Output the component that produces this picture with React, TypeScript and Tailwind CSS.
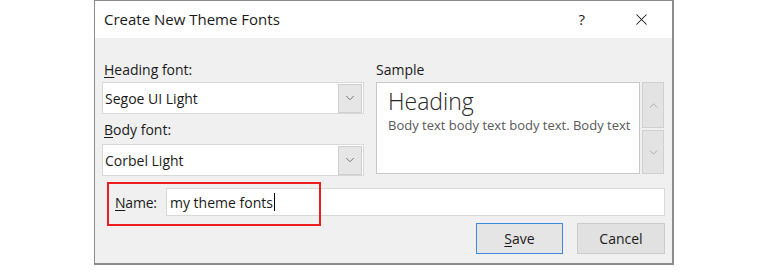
import { ChevronDown, ChevronUp, X } from 'lucide-react';

const font = { fontFamily: '"Open Sans", "Noto Sans", Arial, sans-serif' };

function Combo({ value }: { value: string }) {
  return (
    <div className="flex h-[32px] w-[262px] items-center border border-[#d9d9d9] bg-white">
      <span className="flex-1 pl-[2px] text-[14px] text-[#1a1a1a]">{value}</span>
      <div className="mr-[1px] flex h-[29px] w-[24px] items-center justify-center border border-[#cfcfcf] bg-[#e6e6e6]">
        <ChevronDown size={14} strokeWidth={1.5} className="text-[#666]" />
      </div>
    </div>
  );
}

export default function App() {
  return (
    <div className="h-[272px] w-[768px] bg-white" style={font}>
      <div className="relative ml-[94px] flex h-[265px] w-[580px] flex-col border border-r-2 border-b-2 border-[#8c8c8c] bg-[#f0f0f0]">
        {/* title bar */}
        <div className="flex h-[37px] items-center bg-white pl-[9px] pr-[21px]">
          <span className="flex-1 text-[15px] text-[#1a1a1a]">Create New Theme Fonts</span>
          <span className="mr-[47px] text-[15px] text-[#1a1a1a]">?</span>
          <X size={19} strokeWidth={1.3} className="text-[#1a1a1a]" />
        </div>

        <div className="flex pl-[7px] pt-[22px]">
          {/* left column */}
          <div className="flex w-[262px] flex-col">
            <div className="h-[22px] pl-[2px] text-[14px] leading-[20px] text-[#1a1a1a]">
              <span className="underline underline-offset-2">H</span>eading font:
            </div>
            <Combo value="Segoe UI Light" />
            <div className="mt-[6px] h-[24px] pl-[2px] text-[14px] leading-[20px] text-[#1a1a1a]">
              <span className="underline underline-offset-2">B</span>ody font:
            </div>
            <Combo value="Corbel Light" />
          </div>

          {/* sample */}
          <div className="ml-[12px] flex flex-col">
            <div className="h-[22px] text-[14px] leading-[20px] text-[#1a1a1a]">Sample</div>
            <div className="flex gap-[2px]">
              <div className="h-[92px] w-[264px] overflow-hidden border border-[#c8c8c8] bg-white pl-[11px] pt-[3px]">
                <div className="text-[23px] font-light leading-[30px] text-[#262626]">Heading</div>
                <div className="whitespace-nowrap text-[13px] leading-[18px] text-[#595959]">
                  Body text body text body text. Body text
                </div>
              </div>
              <div className="flex flex-col gap-[2px]">
                <div className="flex h-[46px] w-[22px] items-center justify-center border border-[#d0d0d0] bg-[#e3e3e3]">
                  <ChevronUp size={13} strokeWidth={1.5} className="text-[#a0a0a0]" />
                </div>
                <div className="flex h-[44px] w-[22px] items-center justify-center border border-[#d0d0d0] bg-[#e3e3e3]">
                  <ChevronDown size={13} strokeWidth={1.5} className="text-[#a0a0a0]" />
                </div>
              </div>
            </div>
          </div>
        </div>

        {/* name row */}
        <div className="mt-[12px] flex items-center pl-[20px]">
          <span className="w-[51px] text-[14px] tracking-[-0.2px] text-[#1a1a1a]">
            <span className="underline underline-offset-2">N</span>ame:
          </span>
          <div className="flex h-[28px] w-[499px] items-center border border-[#d9d9d9] bg-white pl-[3px] text-[14px] text-[#1a1a1a]">
            my theme fonts
            <span className="ml-[1px] h-[18px] w-[1px] bg-black" />
          </div>
        </div>

        {/* buttons */}
        <div className="mt-[7px] flex justify-end gap-[14px] pr-[7px]">
          <div className="flex h-[31px] w-[87px] items-center justify-center border border-[#3c8ad9] bg-[#e5e5e5] text-[14px] text-[#1a1a1a]">
            <span className="underline underline-offset-2">S</span>ave
          </div>
          <div className="flex h-[31px] w-[88px] items-center justify-center border border-[#cccccc] bg-[#e1e1e1] text-[14px] text-[#1a1a1a]">
            Cancel
          </div>
        </div>

        {/* red annotation box */}
        <div className="absolute left-[12px] top-[181px] h-[44px] w-[214px] border-2 border-[#ee1c1c]" />
      </div>
    </div>
  );
}
